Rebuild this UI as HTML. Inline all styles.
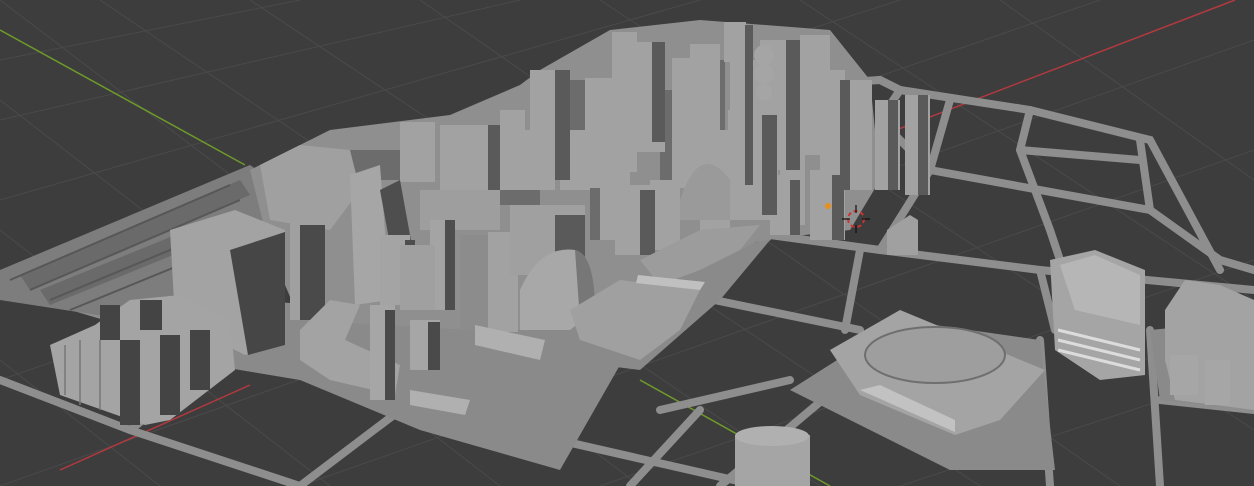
<!DOCTYPE html>
<html><head><meta charset="utf-8"><style>
html,body{margin:0;padding:0;background:#3d3d3d;overflow:hidden}
svg{display:block}
</style></head><body>
<svg width="1254" height="486" viewBox="0 0 1254 486" xmlns="http://www.w3.org/2000/svg">
<rect width="1254" height="486" fill="#3d3d3d"/>
<g stroke="#4a4a4a" stroke-width="1" fill="none">
<path d="M0 60L300 0M0 120L520 0M0 200L700 0M0 290L900 0M0 380L1100 0M0 486L1254 40M300 486L1254 150M600 486L1254 260M900 486L1254 370"/>
<path d="M0 0L640 486M100 0L820 486M250 0L980 486M420 0L1120 486M600 0L1254 430M800 0L1254 300M1000 0L1254 180M0 100L500 486M0 230L330 486M0 360L160 486"/>
</g>
<line x1="0" y1="30" x2="245" y2="165" stroke="#6e9a2a" stroke-width="1.5"/>
<line x1="640" y1="380" x2="830" y2="486" stroke="#6e9a2a" stroke-width="1.5"/>
<line x1="870" y1="140" x2="1235" y2="0" stroke="#b3393f" stroke-width="1.5"/>
<line x1="60" y1="470" x2="250" y2="385" stroke="#b3393f" stroke-width="1.5"/>
<g stroke="#8e8e8e" stroke-width="8" fill="none" stroke-linecap="round">
<path d="M0 380L130 430L300 486"/>
<path d="M0 285L270 365L470 420L760 486"/>
<path d="M130 430L260 330M300 486L440 380M470 420L560 340M630 486L700 410M760 486L780 440"/>
<path d="M700 300L770 235L880 250L1040 270L1254 290"/>
<path d="M690 295L860 330M860 250L845 330M1040 270L1055 330"/>
<path d="M880 250L930 170L1150 210L1220 260L1254 270"/>
<path d="M930 170L880 120L900 90L1030 110L1150 140L1220 270"/>
<path d="M950 100L930 170M1030 110L1020 150L1050 230L1060 260M1140 140L1150 210M1020 150L1140 160M900 90L880 80L850 82"/>
<path d="M790 380L660 410M1040 340L1050 486M1150 330L1160 486M1160 400L1254 410"/>
<path d="M870 360L720 486"/>
</g>
<polygon points="0,270 250,165 300,200 280,260 130,320 0,300" fill="#7d7d7d"/>
<polygon points="120,350 250,300 640,330 560,470 420,430 300,380" fill="#8a8a8a"/>
<polygon points="560,300 640,260 770,240 720,300 640,370 560,360" fill="#8a8a8a"/>
<polygon points="790,390 900,320 1040,340 1055,470 950,470" fill="#8a8a8a"/>
<polygon points="1150,330 1254,320 1254,410 1160,400" fill="#8a8a8a"/>
<g fill="#6a6a6a"><path d="M20 275L240 180L250 195L30 290Z"/><path d="M40 290L200 225L210 240L50 305Z"/></g>
<g stroke="#575757" stroke-width="2"><path d="M10 280L230 185M30 290L240 200M50 300L230 225M70 310L180 265"/></g>
<polygon points="250,170 330,130 450,115 520,85 540,70 610,30 700,20 830,30 870,80 880,180 850,230 760,240 700,270 600,300 560,330 470,330 300,320 270,250" fill="#8f8f8f"/>
<g fill="#6c6c6c">
<rect x="570" y="80" width="15" height="100"/><rect x="660" y="90" width="12" height="90"/><rect x="705" y="60" width="20" height="70"/>
<rect x="340" y="150" width="60" height="30"/><rect x="500" y="185" width="40" height="20"/><rect x="590" y="180" width="20" height="60"/>
</g>
<g fill="#a2a2a2">
<rect x="530" y="70" width="40" height="110"/><rect x="585" y="78" width="30" height="110"/>
<rect x="612" y="32" width="25" height="140"/><rect x="635" y="42" width="30" height="110"/>
<rect x="672" y="58" width="30" height="130"/><rect x="690" y="44" width="30" height="90"/>
<rect x="724" y="22" width="22" height="40"/><rect x="730" y="60" width="30" height="130"/>
<rect x="760" y="40" width="40" height="130"/><rect x="800" y="35" width="30" height="120"/>
<rect x="820" y="70" width="25" height="110"/><rect x="842" y="80" width="30" height="110"/>
<rect x="728" y="110" width="50" height="110"/><rect x="780" y="115" width="25" height="110"/>
<rect x="810" y="170" width="35" height="70"/><rect x="770" y="175" width="30" height="60"/>
<rect x="875" y="100" width="25" height="90"/><rect x="905" y="95" width="25" height="100"/>
<rect x="440" y="125" width="60" height="70"/><rect x="400" y="122" width="35" height="60"/>
<rect x="500" y="110" width="25" height="80"/><rect x="520" y="130" width="35" height="60"/>
<rect x="560" y="130" width="30" height="60"/>
<rect x="600" y="150" width="30" height="90"/><rect x="615" y="185" width="40" height="70"/>
<rect x="650" y="180" width="30" height="70"/><rect x="700" y="130" width="30" height="100"/>
</g>
<g fill="#5a5a5a">
<rect x="555" y="70" width="15" height="110"/><rect x="652" y="42" width="13" height="100"/>
<rect x="745" y="25" width="8" height="160"/><rect x="786" y="40" width="14" height="130"/>
<rect x="840" y="80" width="10" height="110"/><rect x="888" y="100" width="10" height="90"/>
<rect x="918" y="95" width="10" height="100"/><rect x="762" y="115" width="15" height="100"/>
<rect x="832" y="175" width="12" height="65"/><rect x="790" y="180" width="10" height="55"/>
<rect x="488" y="125" width="12" height="70"/><rect x="640" y="190" width="15" height="65"/>
</g>
<circle cx="764" cy="55" r="10" fill="#a5a5a5"/><circle cx="764" cy="74" r="10" fill="#a5a5a5"/><circle cx="764" cy="92" r="8" fill="#a5a5a5"/>
<path d="M680 200Q700 140 730 180L730 220L680 220Z" fill="#9a9a9a"/>
<polygon points="260,165 300,145 350,150 360,190 330,230 270,220" fill="#a0a0a0"/>
<polygon points="350,175 380,165 390,300 355,305" fill="#a6a6a6"/>
<polygon points="380,190 400,180 420,290 400,300" fill="#4e4e4e"/>
<rect x="420" y="190" width="80" height="40" fill="#9e9e9e"/>
<rect x="380" y="235" width="30" height="70" fill="#a4a4a4"/><rect x="405" y="240" width="10" height="65" fill="#4e4e4e"/>
<rect x="430" y="220" width="25" height="90" fill="#a4a4a4"/><rect x="445" y="220" width="10" height="90" fill="#4e4e4e"/>
<rect x="400" y="245" width="35" height="65" fill="#a0a0a0"/>
<rect x="460" y="235" width="30" height="95" fill="#8c8c8c"/><rect x="488" y="232" width="30" height="100" fill="#a2a2a2"/>
<rect x="510" y="205" width="75" height="70" fill="#a0a0a0"/><rect x="555" y="215" width="30" height="60" fill="#5a5a5a"/>
<path d="M520 330L520 290Q540 245 575 250Q595 255 595 310L570 330Z" fill="#a8a8a8"/>
<path d="M575 250Q595 255 595 310L580 320Z" fill="#777"/>
<polygon points="170,230 235,210 285,230 285,345 245,355 175,320" fill="#a3a3a3"/>
<polygon points="230,250 285,232 285,345 248,355" fill="#464646"/>
<rect x="290" y="220" width="35" height="100" fill="#a0a0a0"/><rect x="300" y="225" width="25" height="95" fill="#4a4a4a"/>
<polygon points="50,345 95,325 130,300 180,295 230,320 235,370 170,420 145,425 60,395" fill="#a4a4a4"/>
<g fill="#444"><rect x="100" y="305" width="20" height="35"/><rect x="140" y="300" width="22" height="30"/><rect x="120" y="340" width="20" height="85"/><rect x="160" y="335" width="20" height="80"/><rect x="190" y="330" width="20" height="60"/></g>
<g stroke="#777" stroke-width="1.5"><path d="M65 345V395M80 340V405M100 340V410"/></g>
<path d="M300 330L330 300L360 305L345 340L400 365L395 395L330 380L300 360Z" fill="#a3a3a3"/>
<rect x="370" y="305" width="25" height="95" fill="#a6a6a6"/><rect x="385" y="310" width="10" height="90" fill="#4a4a4a"/>
<rect x="410" y="320" width="30" height="50" fill="#a6a6a6"/><rect x="428" y="322" width="12" height="48" fill="#4a4a4a"/>
<polygon points="475,325 545,340 540,360 475,345" fill="#b0b0b0"/>
<polygon points="410,390 470,400 465,415 410,405" fill="#b0b0b0"/>
<polygon points="570,310 620,280 700,290 680,330 640,360 580,340" fill="#a0a0a0"/>
<polygon points="640,260 700,230 760,225 740,250 700,270 660,285" fill="#9c9c9c"/>
<polygon points="638,275 705,282 700,290 636,283" fill="#c0c0c0"/>
<polygon points="887,230 910,215 918,220 918,255 887,255" fill="#a0a0a0"/>
<polygon points="830,350 900,310 1045,370 1000,420 955,435 860,395" fill="#a4a4a4"/>
<ellipse cx="935" cy="355" rx="70" ry="28" fill="#9e9e9e" stroke="#6f6f6f" stroke-width="2"/>
<polygon points="860,390 955,432 955,420 880,385" fill="#c2c2c2"/>
<polygon points="1050,260 1095,250 1145,270 1145,375 1100,380 1055,350" fill="#a5a5a5"/>
<g stroke="#dcdcdc" stroke-width="3"><path d="M1058 330L1140 350M1058 340L1140 360M1058 350L1140 370"/></g>
<polygon points="1060,265 1095,255 1140,275 1140,325 1075,310" fill="#b6b6b6"/>
<polygon points="1165,310 1185,280 1220,285 1254,300 1254,410 1175,400 1165,360" fill="#a3a3a3"/>
<rect x="1170" y="355" width="28" height="40" fill="#a6a6a6"/><rect x="1205" y="360" width="25" height="45" fill="#a6a6a6"/>
<rect x="735" y="435" width="75" height="51" fill="#a5a5a5"/>
<ellipse cx="772" cy="436" rx="37" ry="10" fill="#b0b0b0"/>
<circle cx="856" cy="219" r="8" fill="none" stroke="#c33" stroke-width="2" stroke-dasharray="4 3"/>
<path d="M856 205V213M856 225V233M842 219H850M862 219H870" stroke="#111" stroke-width="1.2"/>
<circle cx="828" cy="206" r="3" fill="#e8901a"/>
</svg>
</body></html>
